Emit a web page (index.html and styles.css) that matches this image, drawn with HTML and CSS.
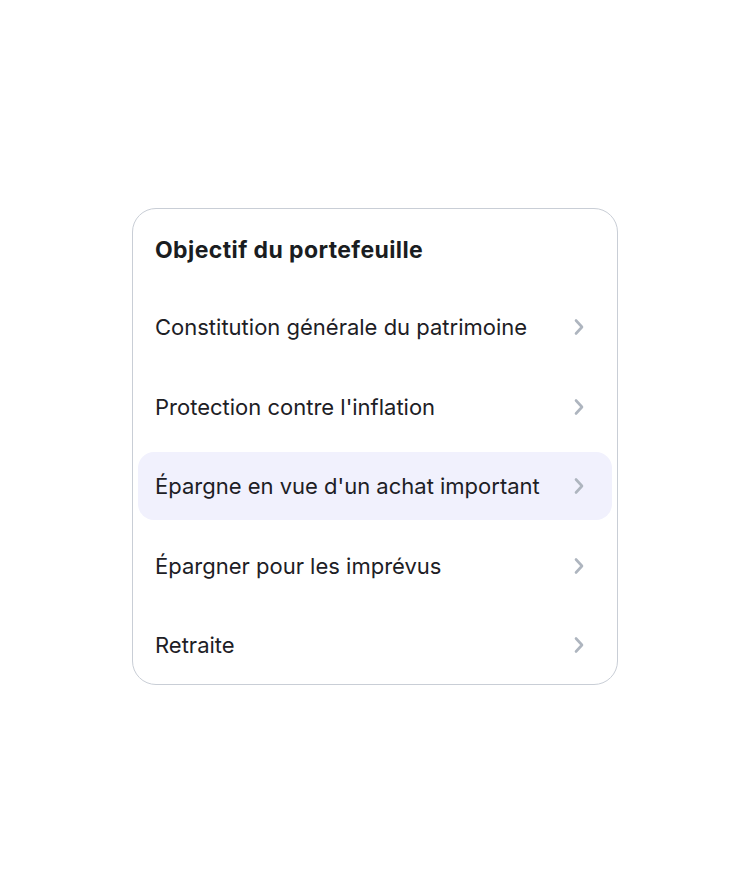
FILE: index.html
```html
<!DOCTYPE html>
<html lang="fr">
<head>
<meta charset="utf-8">
<title>Objectif du portefeuille</title>
<link rel="stylesheet" href="styles.css">
</head>
<body>
<main class="page">
  <section class="card">
    <h2 class="card-title">Objectif du portefeuille</h2>
    <ul class="options">
      <li class="option"><span>Constitution générale du patrimoine</span><svg class="chev" viewBox="0 0 20 20"><path d="M7 3.5l6 6.5-6 6.5"/></svg></li>
      <li class="option"><span>Protection contre l'inflation</span><svg class="chev" viewBox="0 0 20 20"><path d="M7 3.5l6 6.5-6 6.5"/></svg></li>
      <li class="option is-hover"><span>Épargne en vue d'un achat important</span><svg class="chev" viewBox="0 0 20 20"><path d="M7 3.5l6 6.5-6 6.5"/></svg></li>
      <li class="option"><span>Épargner pour les imprévus</span><svg class="chev" viewBox="0 0 20 20"><path d="M7 3.5l6 6.5-6 6.5"/></svg></li>
      <li class="option"><span>Retraite</span><svg class="chev" viewBox="0 0 20 20"><path d="M7 3.5l6 6.5-6 6.5"/></svg></li>
    </ul>
  </section>
</main>
</body>
</html>
```

FILE: styles.css
```css
* { box-sizing: border-box; }

html, body {
  margin: 0;
  background: #ffffff;
}

body {
  font-family: Inter, "Noto Sans", "Liberation Sans", sans-serif;
  color: #1d2025;
}

.page {
  display: flex;
  justify-content: center;
  padding-top: 208px;
}

.card {
  width: 486px;
  border: 1px solid #c9ced6;
  border-radius: 24px;
  padding: 0 5px 5px;
  background: #fff;
}

.card-title {
  margin: 0;
  padding: 26px 17px 0;
  height: 84px;
  font-size: 23px;
  font-weight: 700;
  line-height: 30px;
  letter-spacing: 0.4px;
  color: #1a1d21;
}

.options {
  list-style: none;
  margin: 0;
  padding: 0;
  display: flex;
  flex-direction: column;
  gap: 11.5px;
}

.option {
  height: 68px;
  display: flex;
  align-items: center;
  justify-content: space-between;
  padding: 0 23px 0 17px;
  border-radius: 16px;
  font-size: 22px;
  letter-spacing: 0;
}

.option.is-hover {
  background: #f1f1fd;
}

.chev {
  width: 20px;
  height: 20px;
  fill: none;
  stroke: #aeb5bf;
  stroke-width: 2.6;
  stroke-linecap: round;
  stroke-linejoin: round;
}
```
